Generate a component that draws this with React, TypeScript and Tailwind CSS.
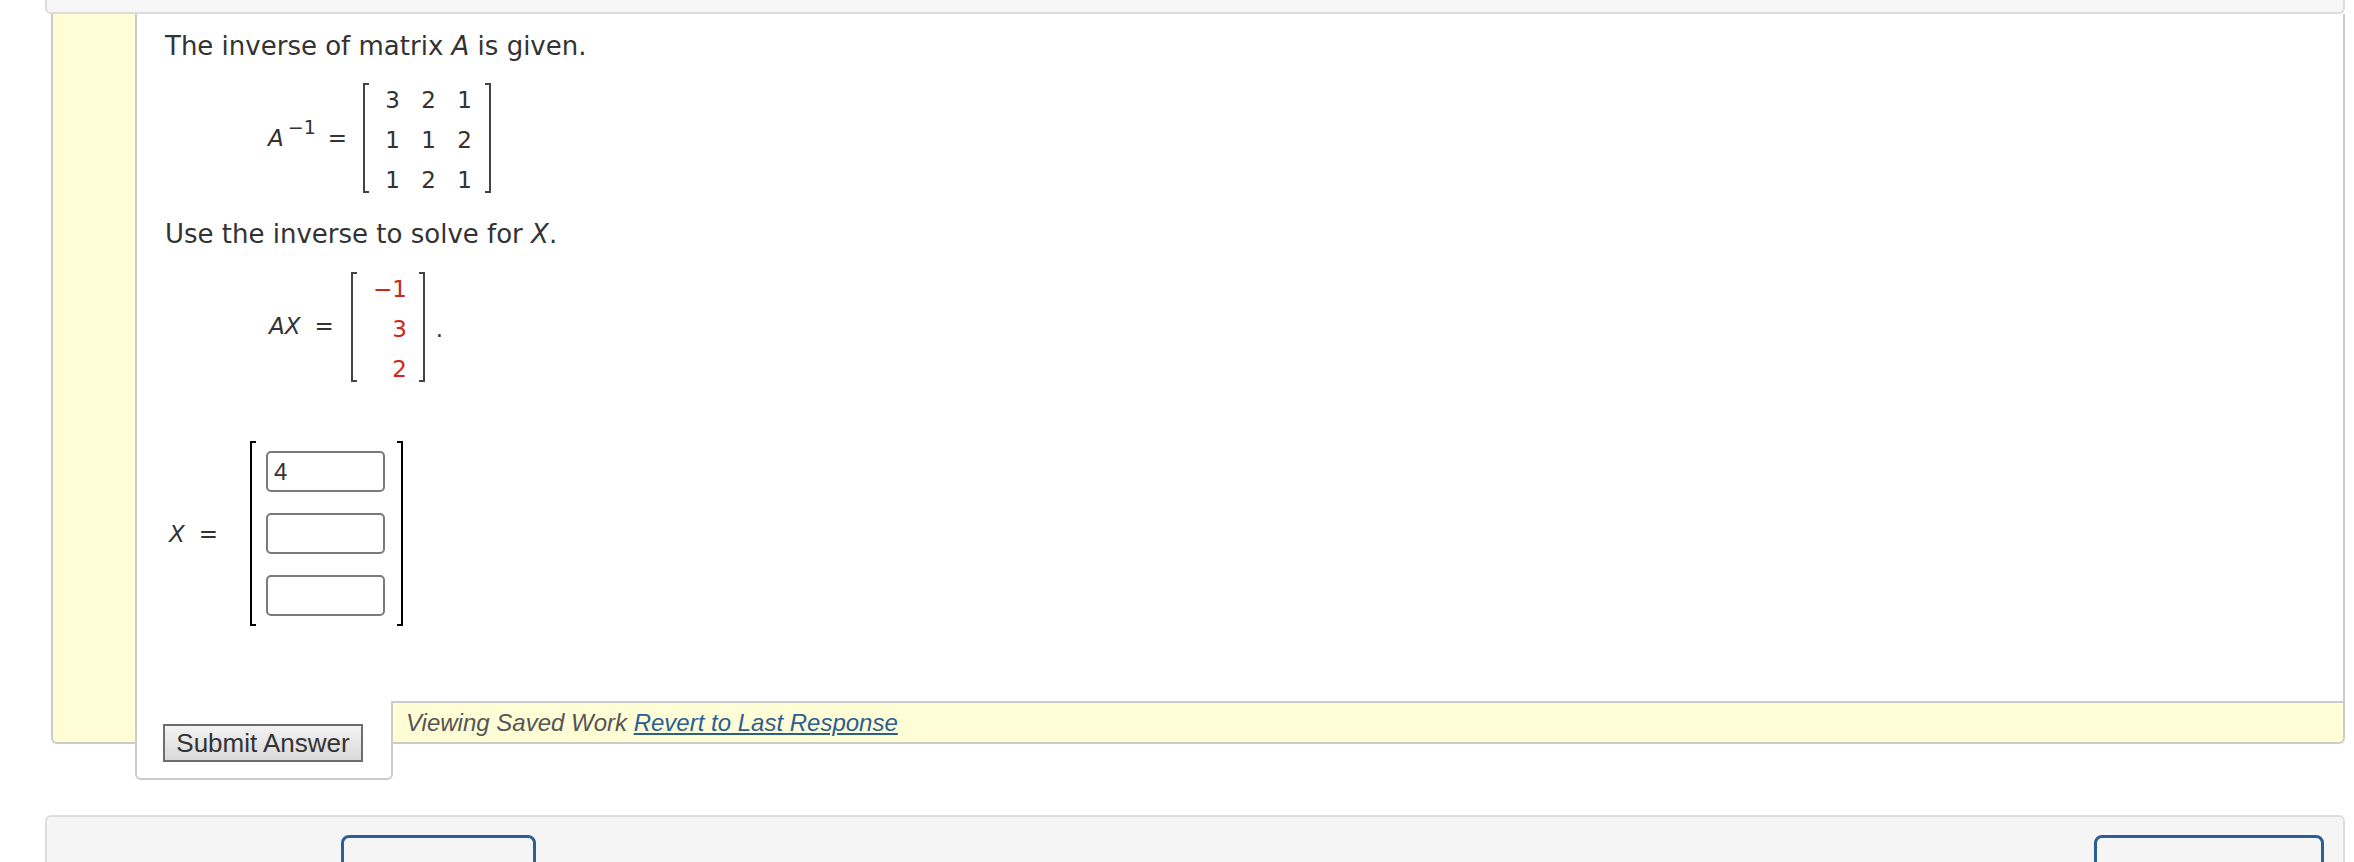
const sans = "font-['DejaVu_Sans',Verdana,sans-serif]";
const arial = "font-['Liberation_Sans',Arial,sans-serif]";

function Bracket({ side, className }: { side: 'l' | 'r'; className: string }) {
  return (
    <div
      className={`w-[6px] shrink-0 border-y-2 ${side === 'l' ? 'border-l-2' : 'border-r-2'} ${className}`}
    />
  );
}

const INVERSE = [
  ['3', '2', '1'],
  ['1', '1', '2'],
  ['1', '2', '1'],
];

const RHS = ['−1', '3', '2'];

export default function App() {
  return (
    <div className={`w-[2354px] h-[862px] overflow-hidden bg-white text-[#333] ${sans}`}>
      {/* bottom of the previous question */}
      <div className="ml-[45px] w-[2300px] h-[14px] bg-[#f6f6f6] border-x-2 border-b-2 border-[#dcdcdc] rounded-b-[6px]" />

      <div className="ml-[51px] w-[2294px] flex flex-col">
        <div className="flex h-[687px] bg-[#fffdd6] border-x-2 border-[#cccccc]">
          <div className="w-[82px] shrink-0" />
          <div className="flex-1 bg-white border-l-2 border-[#cccccc] pl-[28px] pt-[17px]">
            <p className="text-[26px] leading-[30px]">
              The inverse of matrix <i>A</i> is given.
            </p>

            {/* A^-1 */}
            <div className="mt-[19px] flex items-start text-[23px] text-[#333]">
              <div className="ml-[103px] mt-[38px] h-[40px] leading-[40px] flex whitespace-nowrap">
                <i>A</i>
                <span className="ml-[4px] text-[19px] leading-none self-start mt-[0px]">−1</span>
                <span className="ml-[12px]">=</span>
              </div>
              <Bracket side="l" className="ml-[16px] mt-[3px] h-[110px] border-[#444]" />
              <div className="grid grid-cols-[15px_15px_15px] gap-x-[21px] pl-[16px] pr-[13px]">
                {INVERSE.flat().map((v, i) => (
                  <span key={i} className="h-[40px] leading-[40px] text-center">
                    {v}
                  </span>
                ))}
              </div>
              <Bracket side="r" className="mt-[3px] h-[110px] border-[#444]" />
            </div>

            <p className="mt-[19px] text-[26px] leading-[30px]">
              Use the inverse to solve for <i>X</i>.
            </p>

            {/* AX */}
            <div className="mt-[20px] flex items-start text-[23px] text-[#333]">
              <div className="ml-[104px] mt-[37px] h-[40px] leading-[40px] flex whitespace-nowrap">
                <i>AX</i>
                <span className="ml-[14px]">=</span>
              </div>
              <Bracket side="l" className="ml-[17px] mt-[3px] h-[110px] border-[#444]" />
              <div className="flex flex-col w-[34px] ml-[16px] mr-[12px] text-[#d0271d]">
                {RHS.map((v) => (
                  <span key={v} className="h-[40px] leading-[40px] text-right">
                    {v}
                  </span>
                ))}
              </div>
              <Bracket side="r" className="mt-[3px] h-[110px] border-[#444]" />
              <span className="ml-[11px] mt-[40px] h-[40px] leading-[40px]">.</span>
            </div>

            {/* X */}
            <div className="mt-[52px] flex items-center text-[23px] text-[#333]">
              <div className="ml-[4px] h-[40px] leading-[40px] flex whitespace-nowrap">
                <i>X</i>
                <span className="ml-[14px]">=</span>
              </div>
              <div className="ml-[32px] flex items-stretch">
                <Bracket side="l" className="border-black" />
                <div className="flex flex-col gap-[21px] py-[10px] pl-[10px] pr-[12px]">
                  {['4', '', ''].map((v, i) => (
                    <input
                      key={i}
                      readOnly
                      value={v}
                      className={`w-[119px] h-[41px] border-2 border-[#7a7a7a] rounded-[5px] bg-white px-[6px] text-[24px] text-[#333] ${arial}`}
                    />
                  ))}
                </div>
                <Bracket side="r" className="border-black" />
              </div>
            </div>
          </div>
        </div>

        {/* submit strip */}
        <div className="flex items-start">
          <div className="w-[84px] h-[43px] shrink-0 bg-[#fffdd6] border-l-2 border-b-2 border-[#cccccc] rounded-bl-[6px]" />
          <div className="w-[258px] h-[79px] shrink-0 bg-white border-x-2 border-b-2 border-[#cccccc] rounded-b-[6px] pl-[26px] pt-[23px]">
            <button
              className={`w-[200px] h-[38px] border-2 border-[#6e6e6e] bg-gradient-to-b from-[#f3f3f3] to-[#d9d9d9] text-[26px] leading-[34px] text-[#333] text-center ${arial}`}
            >
              Submit Answer
            </button>
          </div>
          <div
            className={`flex-1 h-[43px] bg-[#fffdd6] border-y-2 border-r-2 border-[#cccccc] rounded-br-[6px] pl-[13px] text-[24px] leading-[39px] italic text-[#555] whitespace-nowrap ${arial}`}
          >
            Viewing Saved Work{' '}
            <a className="text-[#2a5f94] underline">Revert to Last Response</a>
          </div>
        </div>
      </div>

      {/* next panel */}
      <div className="mt-[35px] ml-[45px] w-[2300px] h-[80px] bg-[#f5f5f5] border-2 border-[#dddddd] rounded-[6px] flex items-start pt-[18px] pl-[294px] pr-[19px]">
        <div className="w-[195px] h-[60px] border-[3px] border-[#2b6095] rounded-[8px]" />
        <div className="flex-1" />
        <div className="w-[230px] h-[60px] border-[3px] border-[#2b6095] rounded-[8px]" />
      </div>
    </div>
  );
}
